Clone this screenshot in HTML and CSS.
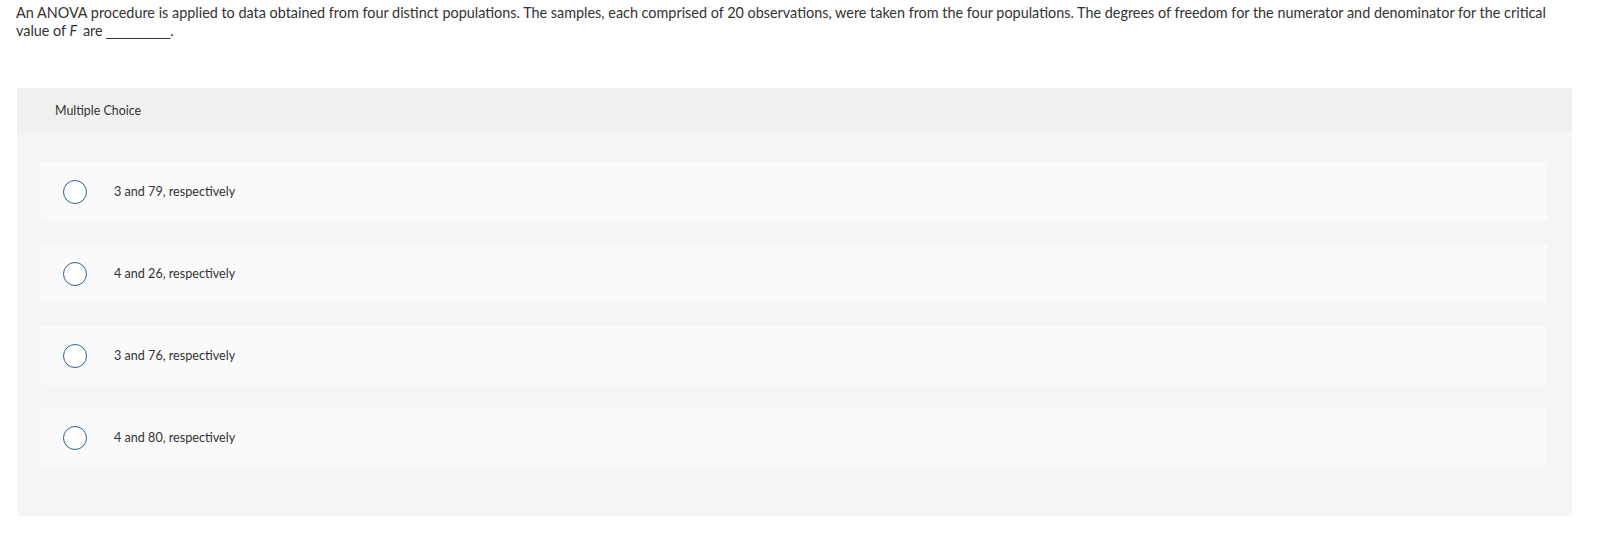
FILE: index.html
```html
<!DOCTYPE html>
<html>
<head>
<meta charset="utf-8">
<link rel="stylesheet" href="styles.css">
</head>
<body>
<div class="question">An ANOVA procedure is applied to data obtained from four distinct populations. The samples, each comprised of 20 observations, were taken from the four populations. The degrees of freedom for the numerator and denominator for the critical <span class="tail">value of <i class="var">F</i> are <span class="blank">________</span>.</span></div>
<div class="panel">
  <div class="panel-head">Multiple Choice</div>
  <div class="panel-body">
    <div class="option"><span class="radio"></span><span class="label">3 and 79, respectively</span></div>
    <div class="option"><span class="radio"></span><span class="label">4 and 26, respectively</span></div>
    <div class="option"><span class="radio"></span><span class="label">3 and 76, respectively</span></div>
    <div class="option"><span class="radio"></span><span class="label">4 and 80, respectively</span></div>
  </div>
</div>
</body>
</html>
```

FILE: styles.css
```css
body {
  margin: 0;
  background: #ffffff;
  font-family: Lato, "Liberation Sans", sans-serif;
  color: #333333;
}
.question {
  padding: 3.5px 0 0 16px;
  width: 1570px;
  font-size: 14.4px;
  line-height: 18.4px;
  height: 88px;
  box-sizing: border-box;
}
.tail {
  white-space: nowrap;
}
.var {
  padding-right: 2px;
}
.blank {
  font-family: "Liberation Sans", Arial, sans-serif;
  letter-spacing: 0;
}
.panel {
  margin-left: 17px;
  width: 1555px;
  background: #f5f5f5;
  border-radius: 3px;
}
.panel-head {
  background: #f0f0f0;
  height: 45px;
  display: flex;
  align-items: center;
  padding-left: 38px;
  font-size: 12.4px;
  color: #333;
  border-radius: 3px 3px 0 0;
}
.panel-body {
  padding: 29px 25px 49px 23px;
  display: flex;
  flex-direction: column;
  gap: 23px;
}
.option {
  height: 59px;
  background: #fafafa;
  border-radius: 3px;
  display: flex;
  align-items: center;
  padding-left: 23px;
}
.radio {
  width: 22px;
  height: 22px;
  border: 1.5px solid #2d5f91;
  border-radius: 50%;
  background: #fff;
  flex: none;
}
.label {
  margin-left: 27px;
  font-size: 12.6px;
  color: #333;
}
```
